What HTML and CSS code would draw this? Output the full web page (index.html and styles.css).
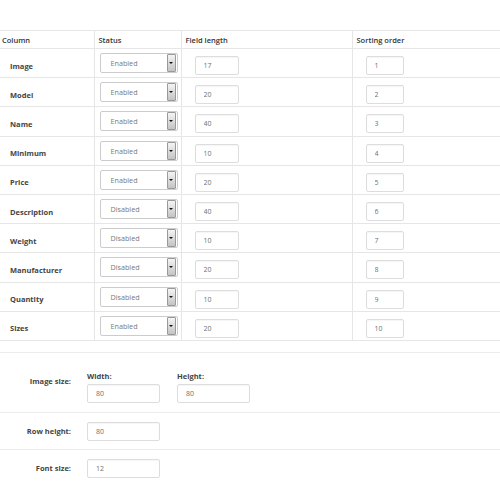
FILE: index.html
```html
<!DOCTYPE html>
<html lang="en"><head>
	<meta charset='utf-8'>
	<title>Columns</title>
	<link rel="stylesheet" href="styles.css">
</head><body>
<table class="columns">
	<thead><tr>
		<th class="c-name">Column</th>
		<th class="c-status">Status</th>
		<th class="c-len">Field length</th>
		<th class="c-sort">Sorting order</th>
	</tr></thead>
	<tbody>
		<tr><th>Image</th><td><div class="select">Enabled<span class="arrow"></span></div></td><td><input class="len" value="17"></td><td><input class="sort" value="1"></td></tr>
		<tr><th>Model</th><td><div class="select">Enabled<span class="arrow"></span></div></td><td><input class="len" value="20"></td><td><input class="sort" value="2"></td></tr>
		<tr><th>Name</th><td><div class="select">Enabled<span class="arrow"></span></div></td><td><input class="len" value="40"></td><td><input class="sort" value="3"></td></tr>
		<tr><th>Minimum</th><td><div class="select">Enabled<span class="arrow"></span></div></td><td><input class="len" value="10"></td><td><input class="sort" value="4"></td></tr>
		<tr><th>Price</th><td><div class="select">Enabled<span class="arrow"></span></div></td><td><input class="len" value="20"></td><td><input class="sort" value="5"></td></tr>
		<tr><th>Description</th><td><div class="select">Disabled<span class="arrow"></span></div></td><td><input class="len" value="40"></td><td><input class="sort" value="6"></td></tr>
		<tr><th>Weight</th><td><div class="select">Disabled<span class="arrow"></span></div></td><td><input class="len" value="10"></td><td><input class="sort" value="7"></td></tr>
		<tr><th>Manufacturer</th><td><div class="select">Disabled<span class="arrow"></span></div></td><td><input class="len" value="20"></td><td><input class="sort" value="8"></td></tr>
		<tr><th>Quantity</th><td><div class="select">Disabled<span class="arrow"></span></div></td><td><input class="len" value="10"></td><td><input class="sort" value="9"></td></tr>
		<tr><th>Sizes</th><td><div class="select">Enabled<span class="arrow"></span></div></td><td><input class="len" value="20"></td><td><input class="sort" value="10"></td></tr>
	</tbody>
</table>
<div class="options">
	<div class="opt opt-size">
		<label class="opt-label">Image size:</label>
		<div class="sub"><span>Width:</span><input class="wide" value="80"></div>
		<div class="sub"><span>Height:</span><input class="wide" value="80"></div>
	</div>
	<div class="opt">
		<label class="opt-label">Row height:</label>
		<input class="wide" value="80">
	</div>
	<div class="opt opt-last">
		<label class="opt-label">Font size:</label>
		<input class="wide" value="12">
	</div>
</div>
</body></html>
```

FILE: styles.css
```css
* { box-sizing:border-box; font-family:'Open Sans', 'Liberation Sans', sans-serif }
html, body { margin:0; padding:0; background:#fff }
body { width:500px; height:500px; overflow:hidden }

table.columns { border-collapse:collapse; width:500px; margin-top:30px; table-layout:fixed }
.columns th, .columns td { padding:0; border-bottom:1px solid #e6e6e6; text-align:left; vertical-align:middle }
.columns th + th, .columns th + td, .columns td + td { border-left:1px solid #e6e6e6 }
.columns thead tr { border-top:1px solid #e6e6e6 }
.columns thead th { height:18px; font-size:7.5px; font-weight:600; color:#333; padding-left:4px; padding-top:1px }
.c-name { width:94px }
.c-status { width:87px }
.c-len { width:171px }
.c-sort { width:148px }
.columns thead th.c-name { padding-left:2px }

.columns tbody th { height:29.2px; font-size:7.5px; font-weight:700; color:#444; padding-left:10px; padding-top:5px }
.columns tbody td { padding-left:5px }
.columns tbody td + td { padding-left:13px }

.select { display:flex; align-items:center; justify-content:space-between; width:78px; height:20px; border:1px solid #ccc; border-radius:2px; background:#fff; font-size:7.2px; color:#777; padding-left:10px }
.arrow { display:flex; align-items:center; justify-content:center; width:9px; height:18px; margin-right:1px; border:1px solid #999; border-radius:1px; background:linear-gradient(#f4f4f4, #c4c4c4) }
.arrow::after { content:''; border-left:2px solid transparent; border-right:2px solid transparent; border-top:2px solid #111 }

input { height:19px; border:1px solid #ddd; border-radius:2px; box-shadow:inset 0 1px 1px rgba(0,0,0,0.04); font-size:7px; color:#707070; padding:0 0 0 8px; font-family:'Open Sans', 'Liberation Sans', sans-serif; background:#fff }
input.len { width:44px; margin-top:1px }
input.sort { width:38px }
input.wide { width:73px }

.options { margin-top:11px; border-top:1px solid #ececec }
.opt { display:flex; align-items:center; gap:16px; padding:9px 0 8px; border-bottom:1px solid #ececec }
.opt-size { align-items:flex-start; padding:18px 0 9px }
.opt-last { border-bottom:none }
.opt-label { width:71px; text-align:right; font-size:7.5px; font-weight:700; color:#444 }
.opt-size .opt-label { padding-top:5px }
.sub { display:flex; flex-direction:column; gap:3px; margin-right:1px }
.sub span { font-size:7.5px; font-weight:700; color:#444; line-height:10px }
```
